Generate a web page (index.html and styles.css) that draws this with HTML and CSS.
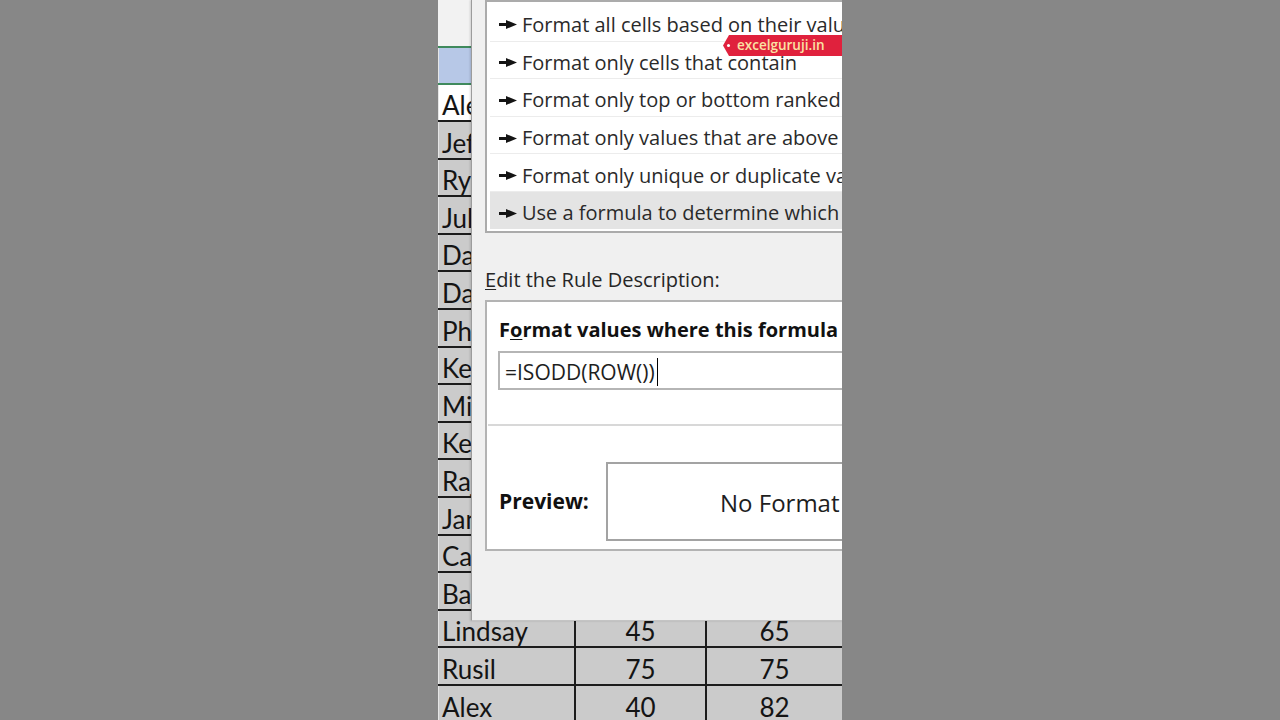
FILE: index.html
```html
<!DOCTYPE html>
<html lang="en">
<head>
<meta charset="utf-8">
<title>New Formatting Rule</title>
<link rel="stylesheet" href="styles.css">
</head>
<body>
<div class="stage">
  <div class="sheet">
    <div class="title-row"></div>
    <div class="row head"><div class="cell">Name</div><div class="cell">Test 1</div><div class="cell">Test 2</div></div>
    <div class="row first"><div class="cell">Alex</div><div class="cell">55</div><div class="cell">70</div></div>
    <div class="row"><div class="cell">Jeff</div><div class="cell">62</div><div class="cell">58</div></div>
    <div class="row"><div class="cell">Ryan</div><div class="cell">48</div><div class="cell">66</div></div>
    <div class="row"><div class="cell">Julie</div><div class="cell">80</div><div class="cell">72</div></div>
    <div class="row"><div class="cell">Dave</div><div class="cell">35</div><div class="cell">60</div></div>
    <div class="row"><div class="cell">Daniel</div><div class="cell">70</div><div class="cell">64</div></div>
    <div class="row"><div class="cell">Phil</div><div class="cell">52</div><div class="cell">49</div></div>
    <div class="row"><div class="cell">Kevin</div><div class="cell">66</div><div class="cell">81</div></div>
    <div class="row"><div class="cell">Mike</div><div class="cell">44</div><div class="cell">57</div></div>
    <div class="row"><div class="cell">Ken</div><div class="cell">90</div><div class="cell">76</div></div>
    <div class="row"><div class="cell">Raj</div><div class="cell">58</div><div class="cell">68</div></div>
    <div class="row"><div class="cell">Janet</div><div class="cell">73</div><div class="cell">85</div></div>
    <div class="row"><div class="cell">Carl</div><div class="cell">61</div><div class="cell">54</div></div>
    <div class="row"><div class="cell">Barry</div><div class="cell">39</div><div class="cell">62</div></div>
    <div class="row"><div class="cell">Lindsay</div><div class="cell">45</div><div class="cell">65</div></div>
    <div class="row"><div class="cell">Rusil</div><div class="cell">75</div><div class="cell">75</div></div>
    <div class="row"><div class="cell">Alex</div><div class="cell">40</div><div class="cell">82</div></div>
  </div>

  <div class="dialog">
    <ul class="rule-list">
      <li class="rule"><svg class="arrow" viewBox="0 0 18 9" width="18" height="9"><path d="M0 3h8v3H0z M7 0 L18 4.5 L7 9 Z"/></svg><span>Format all cells based on their values</span></li>
      <li class="rule"><svg class="arrow" viewBox="0 0 18 9" width="18" height="9"><path d="M0 3h8v3H0z M7 0 L18 4.5 L7 9 Z"/></svg><span>Format only cells that contain</span></li>
      <li class="rule"><svg class="arrow" viewBox="0 0 18 9" width="18" height="9"><path d="M0 3h8v3H0z M7 0 L18 4.5 L7 9 Z"/></svg><span>Format only top or bottom ranked values</span></li>
      <li class="rule"><svg class="arrow" viewBox="0 0 18 9" width="18" height="9"><path d="M0 3h8v3H0z M7 0 L18 4.5 L7 9 Z"/></svg><span>Format only values that are above or below average</span></li>
      <li class="rule"><svg class="arrow" viewBox="0 0 18 9" width="18" height="9"><path d="M0 3h8v3H0z M7 0 L18 4.5 L7 9 Z"/></svg><span>Format only unique or duplicate values</span></li>
      <li class="rule selected"><svg class="arrow" viewBox="0 0 18 9" width="18" height="9"><path d="M0 3h8v3H0z M7 0 L18 4.5 L7 9 Z"/></svg><span>Use a formula to determine which cells to format</span></li>
    </ul>

    <div class="section-label"><u>E</u>dit the Rule Description:</div>

    <div class="desc">
      <div class="desc-title">F<u>o</u>rmat values where this formula is true:</div>
      <div class="formula">=ISODD(ROW())<span class="caret"></span></div>
      <div class="sep"></div>
      <div class="preview-row">
        <div class="preview-label">Preview:</div>
        <div class="preview-box">No Format Set</div>
      </div>
    </div>
  </div>

  <div class="badge">excelguruji.in</div>
</div>
</body>
</html>
```

FILE: styles.css
```css
html, body {
  margin: 0;
  padding: 0;
}

body {
  background: #878787;
  height: 720px;
  overflow: hidden;
}

.stage {
  position: relative;
  margin-left: 438px;
  width: 404px;
  height: 720px;
  overflow: hidden;
  background: #f2f2f2;
}

/* ---------- spreadsheet ---------- */
.sheet {
  display: flex;
  flex-direction: column;
}

.title-row {
  height: 46px;
  flex: none;
  background: #f2f2f2;
  border-bottom: 2px solid #3f8a5d;
}

.row {
  flex: none;
  display: grid;
  grid-template-columns: 138px 131px 135px;
  height: 37.6px;
  box-sizing: border-box;
  border-bottom: 2px solid #1c1c1c;
  background: #cbcbcb;
  box-shadow: inset 1px 0 0 #e6e6e6;
}

.row.head {
  height: 36.5px;
  background: #b7c8e7;
  border-bottom-color: #3f8a5d;
}

.row.first {
  background: #ffffff;
}

.cell {
  display: flex;
  align-items: flex-end;
  justify-content: center;
  padding: 0 0 2px 0;
  font-family: Lato, "Liberation Sans", sans-serif;
  font-size: 26px;
  line-height: 26px;
  color: #141414;
  white-space: nowrap;
  overflow: hidden;
  border-right: 2px solid #1c1c1c;
}

.cell:first-child {
  justify-content: flex-start;
  padding-left: 4px;
}

.cell:last-child {
  border-right: none;
}

.row.head .cell {
  border-right: none;
  font-weight: 700;
  justify-content: center;
  padding-left: 0;
  color: #1f2f4f;
}

/* ---------- dialog ---------- */
.dialog {
  position: absolute;
  left: 33px;
  top: 0;
  width: 420px;
  height: 621px;
  box-sizing: border-box;
  background: #f0f0f0;
  border-left: 1px solid #9c9c9c;
  border-bottom: 1px solid #c4c4c4;
  padding-left: 13px;
  font-family: "Open Sans", "Noto Sans", sans-serif;
  color: #222;
  white-space: nowrap;
  box-shadow: -1px 0 2px rgba(0, 0, 0, 0.15);
}

.rule-list {
  list-style: none;
  margin: 0;
  padding: 1px 0 2px 3px;
  background: #ffffff;
  border: 2px solid #ababab;
  border-right: none;
}

.rule {
  display: flex;
  align-items: center;
  gap: 5px;
  height: 37.6px;
  box-sizing: border-box;
  padding: 5px 0 0 9px;
  font-size: 20px;
  color: #2a2a2a;
}

.rule + .rule {
  border-top: 1px solid #ececec;
}

.rule.selected {
  background: #e4e4e4;
}

.arrow {
  flex: none;
  fill: #141414;
  margin-top: 1px;
}

.section-label {
  margin: 33px 0 6px 0;
  font-size: 20px;
  line-height: 28px;
  color: #262626;
}

.section-label u {
  text-decoration-thickness: 1px;
  text-underline-offset: 2px;
}

.desc {
  height: 251px;
  box-sizing: border-box;
  background: #ffffff;
  border: 2px solid #b3b3b3;
  border-right: none;
  padding: 14px 0 0 11px;
}

.desc-title {
  font-size: 20px;
  font-weight: 700;
  line-height: 28px;
  color: #111;
  padding-left: 1px;
}

.desc-title u {
  text-decoration-thickness: 1px;
  text-underline-offset: 2px;
}

.formula {
  margin-top: 7px;
  height: 39px;
  box-sizing: border-box;
  border: 2px solid #b5b5b5;
  border-right: none;
  padding: 3px 0 0 5px;
  font-size: 21px;
  line-height: 32px;
  color: #1e1e1e;
}

.caret {
  display: inline-block;
  width: 1px;
  height: 28px;
  margin-left: 2px;
  vertical-align: -6px;
  background: #000;
}

.sep {
  margin: 34px 0 0 -10px;
  height: 2px;
  background: #d8d8d8;
}

.preview-row {
  display: flex;
  align-items: center;
  margin-top: 36px;
}

.preview-label {
  width: 108px;
  flex: none;
  font-size: 21px;
  font-weight: 700;
  color: #111;
  padding-left: 1px;
  box-sizing: border-box;
}

.preview-box {
  flex: none;
  width: 400px;
  height: 79px;
  box-sizing: border-box;
  border: 2px solid #a3a3a3;
  padding-left: 112px;
  font-size: 24px;
  line-height: 77px;
  color: #1e1e1e;
  background: #fff;
}

/* ---------- watermark badge ---------- */
.badge {
  position: absolute;
  top: 35px;
  left: 285px;
  width: 140px;
  height: 21px;
  box-sizing: border-box;
  padding-left: 14px;
  background: #e0213d;
  clip-path: polygon(0 50%, 6px 0, 100% 0, 100% 100%, 6px 100%);
  font-family: "Open Sans", "Noto Sans", sans-serif;
  font-size: 13.5px;
  font-weight: 600;
  line-height: 21px;
  color: #fbe2a4;
  white-space: nowrap;
}

.badge::before {
  content: "";
  position: absolute;
  left: 4px;
  top: 9px;
  width: 3px;
  height: 3px;
  border-radius: 50%;
  background: #fff;
}
```
